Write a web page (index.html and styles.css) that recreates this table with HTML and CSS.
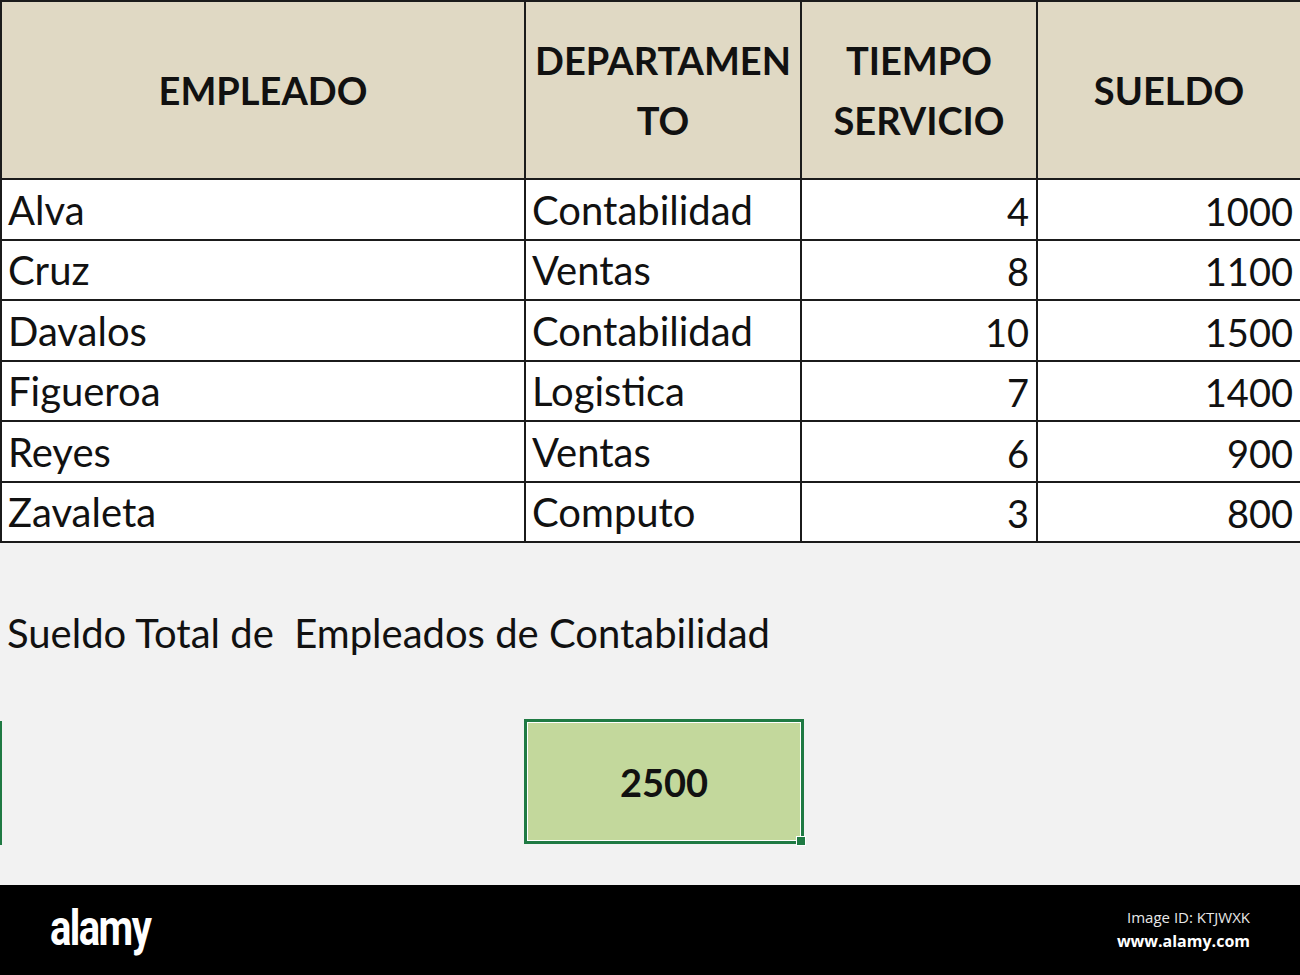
FILE: index.html
```html
<!DOCTYPE html>
<html lang="es">
<head>
<meta charset="utf-8">
<title>Sueldo Total</title>
<link rel="stylesheet" href="styles.css">
</head>
<body>
<div class="page">
  <div class="sheet">
    <div class="grid">
      <div class="cell head">EMPLEADO</div>
      <div class="cell head">DEPARTAMEN<br>TO</div>
      <div class="cell head">TIEMPO<br>SERVICIO</div>
      <div class="cell head last">SUELDO</div>

      <div class="cell">Alva</div>
      <div class="cell">Contabilidad</div>
      <div class="cell num">4</div>
      <div class="cell num last">1000</div>

      <div class="cell">Cruz</div>
      <div class="cell">Ventas</div>
      <div class="cell num">8</div>
      <div class="cell num last">1100</div>

      <div class="cell">Davalos</div>
      <div class="cell">Contabilidad</div>
      <div class="cell num">10</div>
      <div class="cell num last">1500</div>

      <div class="cell">Figueroa</div>
      <div class="cell">Logistica</div>
      <div class="cell num">7</div>
      <div class="cell num last">1400</div>

      <div class="cell">Reyes</div>
      <div class="cell">Ventas</div>
      <div class="cell num">6</div>
      <div class="cell num last">900</div>

      <div class="cell">Zavaleta</div>
      <div class="cell">Computo</div>
      <div class="cell num">3</div>
      <div class="cell num last">800</div>
    </div>
    <div class="summary">
      <div class="label">Sueldo Total de  Empleados de Contabilidad</div>
      <div class="result-row">
        <div class="result">2500<span class="handle"></span></div>
      </div>
      <span class="sel-edge"></span>
    </div>
  </div>
  <footer class="bar">
    <div class="logo">alamy</div>
    <div class="meta">
      <div class="id">Image ID: KTJWXK</div>
      <div class="site">www.alamy.com</div>
    </div>
  </footer>
</div>
</body>
</html>
```

FILE: styles.css
```css
html, body {
  margin: 0;
  padding: 0;
}
body {
  width: 1300px;
  height: 975px;
  overflow: hidden;
  background: #f2f2f2;
  font-family: Lato, "Open Sans", sans-serif;
  color: #111;
}
.page {
  display: flex;
  flex-direction: column;
  height: 975px;
}
.sheet {
  flex: 0 0 885px;
  display: flex;
  flex-direction: column;
  background: #f2f2f2;
}
.grid {
  display: grid;
  grid-template-columns: 524px 276px 236px 1fr;
  grid-template-rows: 178px 61px 60px 61px 60px 61px 60px;
  border-left: 2px solid #1b1b1b;
  border-top: 2px solid #1b1b1b;
  background: #fff;
}
.cell {
  box-sizing: border-box;
  border-right: 2px solid #1b1b1b;
  border-bottom: 2px solid #1b1b1b;
  font-size: 40px;
  display: flex;
  align-items: flex-end;
  padding: 0 7px 9px 6px;
  white-space: nowrap;
  line-height: 1;
}
.cell.last {
  border-right: none;
}
.cell.num {
  justify-content: flex-end;
  font-size: 38px;
  padding-bottom: 9px;
}
.cell.head {
  background: #e0d9c4;
  font-weight: 700;
  font-size: 38px;
  justify-content: center;
  align-items: center;
  text-align: center;
  line-height: 60px;
  padding: 0;
}
.summary {
  position: relative;
  flex: 1;
  display: flex;
  flex-direction: column;
}
.label {
  white-space: pre;
  font-size: 40px;
  margin: 68px 0 0 7px;
  line-height: 44px;
}
.result-row {
  display: flex;
  padding-left: 524px;
  margin-top: 64px;
}
.result {
  position: relative;
  box-sizing: border-box;
  width: 280px;
  height: 125px;
  border: 3px solid #1f7a43;
  box-shadow: inset 0 0 0 1px #fff;
  background: #c3d89c;
  font-weight: 700;
  font-size: 38px;
  display: flex;
  align-items: center;
  justify-content: center;
}
.handle {
  position: absolute;
  right: -5px;
  bottom: -5px;
  width: 8px;
  height: 8px;
  background: #1f7a43;
  border: 1px solid #fff;
}
.sel-edge {
  position: absolute;
  left: 0;
  top: 178px;
  width: 2px;
  height: 124px;
  background: #1f7a43;
}
.bar {
  flex: 1;
  background: #000;
  display: flex;
  align-items: center;
  justify-content: space-between;
  padding: 0 50px 0 50px;
}
.logo {
  color: #fff;
  font-family: "Liberation Sans Narrow", "Roboto", sans-serif;
  font-weight: 700;
  font-size: 50px;
  letter-spacing: -2px;
  transform: scaleX(0.8);
  transform-origin: left center;
  margin-top: -4px;
}
.meta {
  text-align: right;
  font-family: "Open Sans", sans-serif;
  color: #fff;
  margin-top: -2px;
}
.id {
  font-size: 15px;
  line-height: 24px;
  color: #e8e8e8;
}
.site {
  font-size: 16px;
  font-weight: 700;
  line-height: 24px;
}
```
